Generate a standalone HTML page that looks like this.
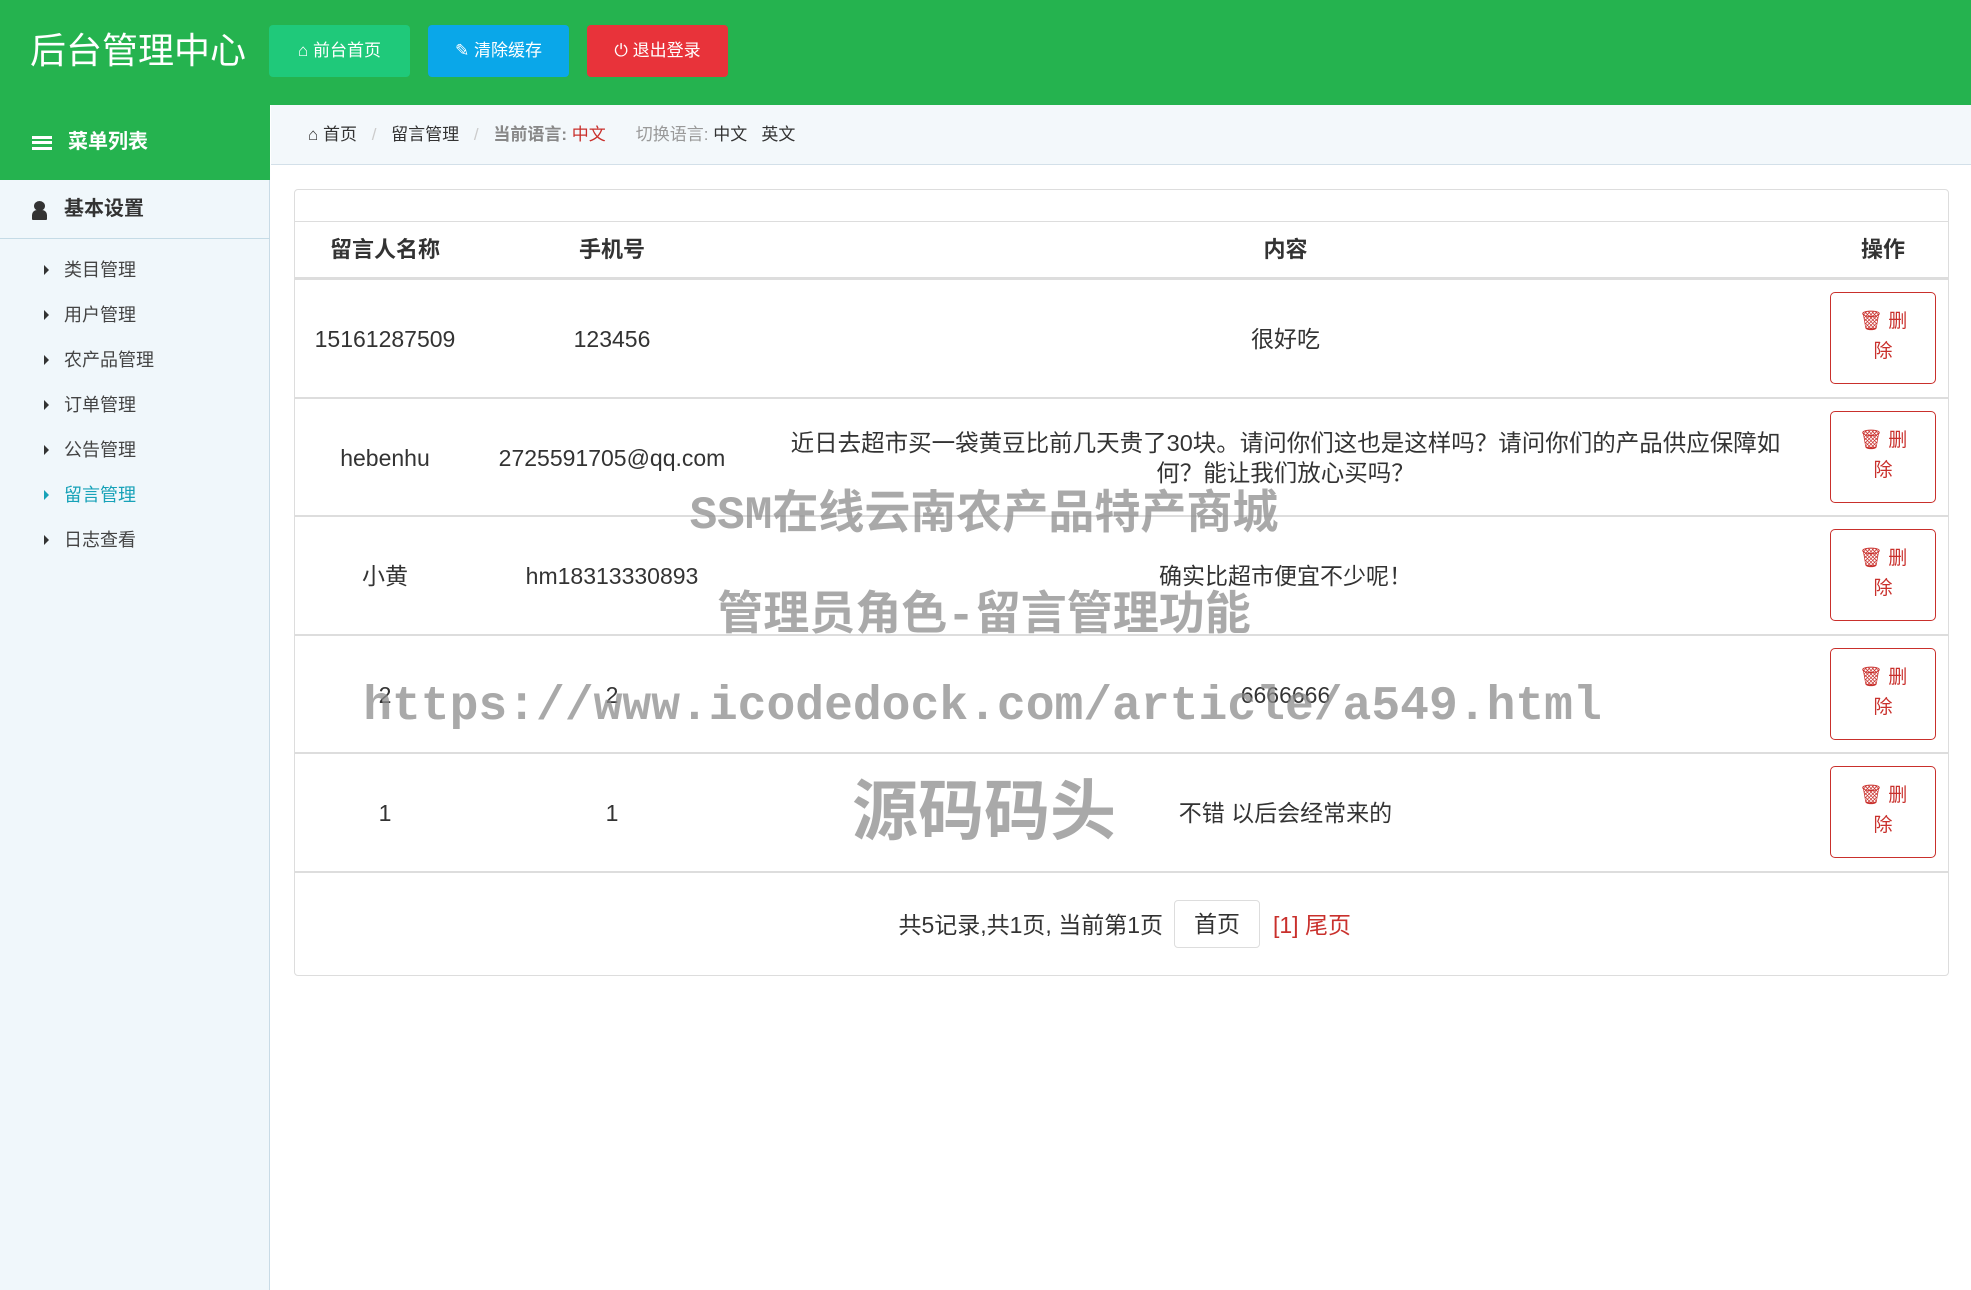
<!DOCTYPE html>
<html><head><meta charset="utf-8"><style>
*{margin:0;padding:0;box-sizing:border-box}
body{width:1971px;height:1290px;position:relative;background:#fff;font-family:"Liberation Sans","Noto Sans CJK SC",sans-serif;color:#333;overflow:hidden}
.a{position:absolute}
.hdr{left:0;top:0;width:1971px;height:105px;background:#25b34f}
.title{left:30px;top:26px;font-size:36px;color:#fff;line-height:50px}
.btn{top:25px;height:52px;width:141px;border-radius:4px;color:#fff;font-size:17px;line-height:52px;text-align:center}
.side{left:0;top:105px;width:270px;height:1185px;background:#f0f7fb;border-right:1px solid #c9dbe6}
.menuh{left:0;top:105px;width:270px;height:75px;background:#25b34f;color:#fff;font-size:20px;font-weight:bold;line-height:75px;padding-left:68px}
.base{left:0;top:180px;width:270px;height:59px;border-bottom:1px solid #c5dbe6;font-size:20px;font-weight:bold;line-height:59px;padding-left:64px;color:#333}
.mi{left:64px;font-size:18px;line-height:24px;color:#444}
.tri{position:absolute;left:-20px;top:7px;width:0;height:0;border-top:5px solid transparent;border-bottom:5px solid transparent;border-left:5px solid #333}
.bc{left:271px;top:105px;width:1700px;height:60px;background:#f3f8fb;border-bottom:1px solid #d3e0e9;font-size:17px;line-height:60px;padding-left:37px;color:#333}
.panel{left:294px;top:189px;width:1655px;height:787px;border:1px solid #ddd;border-radius:4px}
.hl{left:295px;height:1px;width:1653px;background:#ddd}
.th{top:221px;height:57px;line-height:57px;font-weight:bold;font-size:22px;text-align:center;color:#333}
.td{font-size:23px;text-align:center;color:#333;line-height:30px}
.del{left:1830px;width:106px;height:92px;border:1px solid #c9302c;border-radius:5px;color:#c9302c;font-size:19px;text-align:center;padding-top:14px;line-height:30px}
.wm{color:rgba(140,140,140,.75);font-weight:bold;text-align:center;white-space:nowrap}
</style></head><body>
<div class="a hdr"></div>
<div class="a title">后台管理中心</div>
<div class="a btn" style="left:269px;background:#1fc97a">⌂ 前台首页</div>
<div class="a btn" style="left:428px;background:#0aa7e9">✎ 清除缓存</div>
<div class="a btn" style="left:587px;background:#e8333a">⏻ 退出登录</div>

<div class="a side"></div>
<div class="a menuh">菜单列表</div>
<div class="a" style="left:32px;top:136px;width:20px;height:14px;border-top:3px solid #fff;border-bottom:3px solid #fff"></div>
<div class="a" style="left:32px;top:141px;width:20px;height:3px;background:#fff"></div>
<div class="a base">基本设置</div>
<div class="a" style="left:34px;top:201px;width:11px;height:10px;border-radius:50%;background:#333"></div>
<div class="a" style="left:32px;top:210px;width:15px;height:10px;border-radius:5px 5px 1px 1px;background:#333"></div>
<div class="a mi" style="top:258px"><i class="tri"></i>类目管理</div>
<div class="a mi" style="top:303px"><i class="tri"></i>用户管理</div>
<div class="a mi" style="top:348px"><i class="tri"></i>农产品管理</div>
<div class="a mi" style="top:393px"><i class="tri"></i>订单管理</div>
<div class="a mi" style="top:438px"><i class="tri"></i>公告管理</div>
<div class="a mi" style="top:483px;color:#17a2b8"><i class="tri" style="border-left-color:#17a2b8"></i>留言管理</div>
<div class="a mi" style="top:528px"><i class="tri"></i>日志查看</div>

<div class="a bc">⌂ 首页 <span style="color:#ccc;margin:0 10px">/</span> 留言管理 <span style="color:#ccc;margin:0 10px">/</span> <b style="color:#888">当前语言:</b> <span style="color:#c9302c">中文</span><span style="color:#999;margin-left:30px">切换语言:</span> 中文&nbsp;&nbsp; 英文</div>

<div class="a panel"></div>
<div class="a hl" style="top:221px"></div>
<div class="a hl" style="top:277px;height:3px"></div>
<div class="a hl" style="top:397px;height:2px"></div>
<div class="a hl" style="top:515px;height:2px"></div>
<div class="a hl" style="top:634px;height:2px"></div>
<div class="a hl" style="top:752px;height:2px"></div>
<div class="a hl" style="top:871px;height:2px"></div>

<div class="a th" style="left:295px;width:180px">留言人名称</div>
<div class="a th" style="left:475px;width:274px">手机号</div>
<div class="a th" style="left:752px;width:1067px">内容</div>
<div class="a th" style="left:1819px;width:128px">操作</div>

<div class="a td" style="left:295px;width:180px;top:324px">15161287509</div>
<div class="a td" style="left:475px;width:274px;top:324px">123456</div>
<div class="a td" style="left:752px;width:1067px;top:324px">很好吃</div>

<div class="a td" style="left:295px;width:180px;top:443px">hebenhu</div>
<div class="a td" style="left:475px;width:274px;top:443px">2725591705@qq.com</div>
<div class="a td" style="left:752px;width:1067px;top:428px;font-size:23.5px">近日去超市买一袋黄豆比前几天贵了30块。请问你们这也是这样吗？请问你们的产品供应保障如<br>何？能让我们放心买吗？</div>

<div class="a td" style="left:295px;width:180px;top:561px">小黄</div>
<div class="a td" style="left:475px;width:274px;top:561px">hm18313330893</div>
<div class="a td" style="left:752px;width:1067px;top:561px">确实比超市便宜不少呢！</div>

<div class="a td" style="left:295px;width:180px;top:680px">2</div>
<div class="a td" style="left:475px;width:274px;top:680px">2</div>
<div class="a td" style="left:752px;width:1067px;top:680px">6666666</div>

<div class="a td" style="left:295px;width:180px;top:798px">1</div>
<div class="a td" style="left:475px;width:274px;top:798px">1</div>
<div class="a td" style="left:752px;width:1067px;top:798px">不错 以后会经常来的</div>

<div class="a del" style="top:292px">🗑 删<br>除</div>
<div class="a del" style="top:411px">🗑 删<br>除</div>
<div class="a del" style="top:529px">🗑 删<br>除</div>
<div class="a del" style="top:648px">🗑 删<br>除</div>
<div class="a del" style="top:766px">🗑 删<br>除</div>

<div class="a" style="left:700px;top:910px;width:463px;text-align:right;font-size:23px;line-height:30px">共5记录,共1页, 当前第1页</div>
<div class="a" style="left:1174px;top:900px;width:86px;height:48px;border:1px solid #ddd;border-radius:4px;font-size:23px;line-height:46px;text-align:center">首页</div>
<div class="a" style="left:1273px;top:910px;font-size:23px;line-height:30px;color:#c9302c">[1] 尾页</div>

<div class="a wm" style="left:484px;width:1000px;top:476px;font-size:46px;font-family:'Liberation Mono','Noto Sans CJK SC',monospace">SSM在线云南农产品特产商城</div>
<div class="a wm" style="left:484px;width:1000px;top:577px;font-size:46px;font-family:'Liberation Mono','Noto Sans CJK SC',monospace">管理员角色-留言管理功能</div>
<div class="a wm" style="left:362px;width:1241px;top:680px;font-size:48px;font-family:'Liberation Mono',monospace">https://www.icodedock.com/article/a549.html</div>
<div class="a wm" style="left:784px;width:400px;top:758px;font-size:66px;font-family:'Noto Sans CJK SC',sans-serif">源码码头</div>
</body></html>
